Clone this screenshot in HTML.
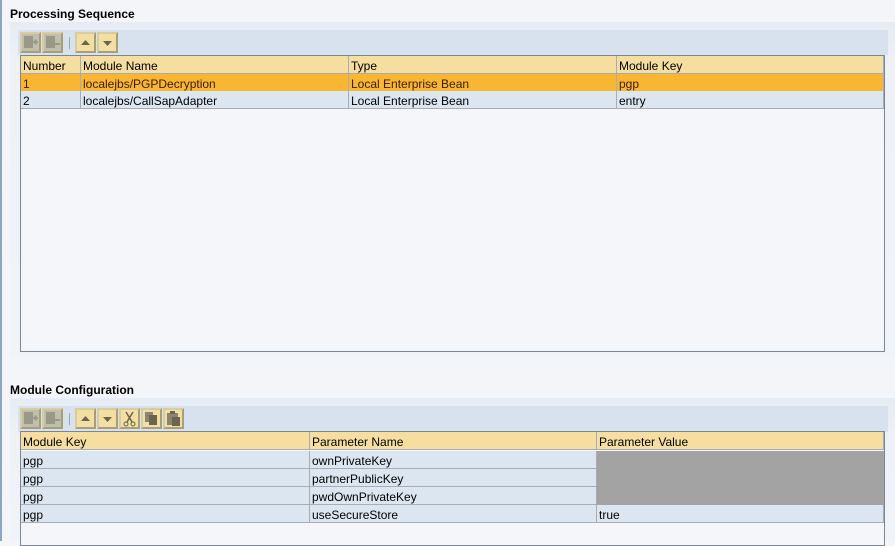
<!DOCTYPE html>
<html><head><style>
*{margin:0;padding:0;box-sizing:border-box}
body{width:895px;height:541px;background:#f3f5f9;font-family:"Liberation Sans",Arial,sans-serif;font-size:12px;color:#000;position:relative;overflow:hidden}
.a{position:absolute}
.ttl{font-weight:bold;font-size:12px}
.panel{background:linear-gradient(#e6ecf3,#eef2f7 40px,#f0f3f8)}
.tb{background:#d7e2ee}
.btn{position:absolute;width:21px;height:21px;background:#f2dfa1;border:2px solid #c9c29a;border-color:#d8cda0 #a89f78 #a89f78 #d8cda0}
.btn.dis{background:#bfbfae}
.tbl{background:#f4f6fa;border:1px solid #7b8694}
.c{position:absolute;padding-left:2px;padding-top:3px;line-height:15px;height:18px;border-right:1px solid #a6adb6;border-bottom:1px solid #a6adb6;white-space:nowrap;overflow:hidden}
.h{background:#f5dea0}
.r{background:#dbe6f1}
.s{background:#f8b633;color:#3b1c00}
</style></head><body>
<div class="a" style="left:0;top:0;width:2px;height:541px;background:#8fa6c4"></div>
<div class="a ttl" style="left:10px;top:7px">Processing Sequence</div>
<div class="a panel" style="left:10px;top:22px;width:885px;height:336px"></div>
<div class="a tb" style="left:18px;top:30px;width:870px;height:25px"></div>
<div class="btn dis" style="left:20px;top:32px"><svg width="17" height="17"><rect x="2" y="2" width="9" height="12" fill="#9a9886"/><path d="M11 8h5M13.5 5.5v5" stroke="#9a9886" stroke-width="2"/></svg></div>
<div class="btn dis" style="left:42px;top:32px"><svg width="17" height="17"><rect x="2" y="2" width="9" height="12" fill="#9a9886"/><path d="M10 10h6" stroke="#9a9886" stroke-width="2"/></svg></div>
<div class="a" style="left:69px;top:37px;width:1px;height:12px;background:#9aa"></div>
<div class="btn" style="left:75px;top:32px"><svg width="17" height="17"><path d="M4 11L8.5 6L13 11Z" fill="#6b6450"/></svg></div>
<div class="btn" style="left:97px;top:32px"><svg width="17" height="17"><path d="M4 7L8.5 12L13 7Z" fill="#6b6450"/></svg></div>
<div class="a tbl" style="left:20px;top:55px;width:865px;height:297px"></div>
<div class="c h" style="left:21px;top:56px;width:60px">Number</div>
<div class="c h" style="left:81px;top:56px;width:268px">Module Name</div>
<div class="c h" style="left:349px;top:56px;width:268px">Type</div>
<div class="c h" style="left:617px;top:56px;width:267px">Module Key</div>
<div class="c s" style="left:21px;top:74px;width:60px">1</div>
<div class="c s" style="left:81px;top:74px;width:268px">localejbs/PGPDecryption</div>
<div class="c s" style="left:349px;top:74px;width:268px">Local Enterprise Bean</div>
<div class="c s" style="left:617px;top:74px;width:267px">pgp</div>
<div class="c r" style="left:21px;top:91px;width:60px">2</div>
<div class="c r" style="left:81px;top:91px;width:268px">localejbs/CallSapAdapter</div>
<div class="c r" style="left:349px;top:91px;width:268px">Local Enterprise Bean</div>
<div class="c r" style="left:617px;top:91px;width:267px">entry</div>

<div class="a ttl" style="left:10px;top:383px">Module Configuration</div>
<div class="a panel" style="left:10px;top:398px;width:885px;height:143px"></div>
<div class="a tb" style="left:18px;top:406px;width:870px;height:26px"></div>
<div class="btn dis" style="left:20px;top:408px"><svg width="17" height="17"><rect x="2" y="2" width="9" height="12" fill="#9a9886"/><path d="M11 8h5M13.5 5.5v5" stroke="#9a9886" stroke-width="2"/></svg></div>
<div class="btn dis" style="left:42px;top:408px"><svg width="17" height="17"><rect x="2" y="2" width="9" height="12" fill="#9a9886"/><path d="M10 10h6" stroke="#9a9886" stroke-width="2"/></svg></div>
<div class="a" style="left:69px;top:413px;width:1px;height:12px;background:#9aa"></div>
<div class="btn" style="left:75px;top:408px"><svg width="17" height="17"><path d="M4 11L8.5 6L13 11Z" fill="#6b6450"/></svg></div>
<div class="btn" style="left:97px;top:408px"><svg width="17" height="17"><path d="M4 7L8.5 12L13 7Z" fill="#6b6450"/></svg></div>
<div class="btn" style="left:119px;top:408px"><svg width="17" height="17"><path d="M5 2L11 12M12 2L6 12" stroke="#6b6450" stroke-width="1.5" fill="none"/><circle cx="5" cy="14" r="2" fill="none" stroke="#6b6450"/><circle cx="12" cy="14" r="2" fill="none" stroke="#6b6450"/></svg></div>
<div class="btn" style="left:141px;top:408px"><svg width="17" height="17"><rect x="2" y="2" width="8" height="10" fill="#8a8470"/><rect x="6" y="5" width="8" height="10" fill="#6b6450"/></svg></div>
<div class="btn" style="left:163px;top:408px"><svg width="17" height="17"><rect x="2" y="3" width="11" height="12" fill="#8a8470"/><rect x="5" y="1" width="5" height="3" fill="#6b6450"/><rect x="7" y="7" width="8" height="9" fill="#6b6450"/></svg></div>
<div class="a tbl" style="left:20px;top:431px;width:865px;height:115px"></div>
<div class="c h" style="left:21px;top:432px;width:289px">Module Key</div>
<div class="c h" style="left:310px;top:432px;width:287px">Parameter Name</div>
<div class="c h" style="left:597px;top:432px;width:287px">Parameter Value</div>
<div class="c r" style="left:21px;top:451px;width:289px">pgp</div>
<div class="c r" style="left:310px;top:451px;width:287px">ownPrivateKey</div>
<div class="c r" style="left:21px;top:469px;width:289px">pgp</div>
<div class="c r" style="left:310px;top:469px;width:287px">partnerPublicKey</div>
<div class="c r" style="left:21px;top:487px;width:289px">pgp</div>
<div class="c r" style="left:310px;top:487px;width:287px">pwdOwnPrivateKey</div>
<div class="a" style="left:597px;top:451px;width:287px;height:54px;background:#a3a3a3"></div>
<div class="c r" style="left:21px;top:505px;width:289px">pgp</div>
<div class="c r" style="left:310px;top:505px;width:287px">useSecureStore</div>
<div class="c r" style="left:597px;top:505px;width:287px">true</div>
</body></html>
